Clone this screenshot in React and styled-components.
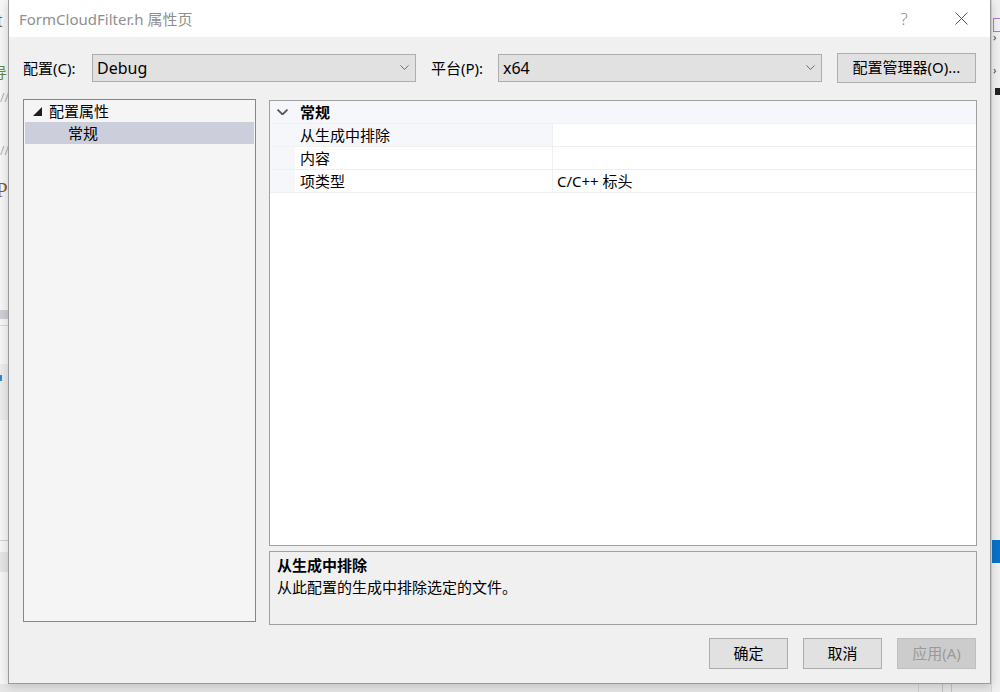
import styled, { createGlobalStyle } from "styled-components";

/** fonts: Segoe UI / YaHei look-alike */
const UI_FONT = `"Noto Sans", "Noto Sans CJK SC", sans-serif`;
const BORDER = "#adadad";

const GlobalStyle = createGlobalStyle`
  html, body { margin: 0; padding: 0; }
  body {
    font-family: ${UI_FONT};
    font-size: 15px;
    color: #000;
    overflow: hidden;
  }
`;

/** desktop behind the dialog */
const Desktop = styled.div`
  position: relative;
  width: 1000px;
  height: 692px;
  overflow: hidden;
  background: linear-gradient(to bottom, #f7f7f7 0, #f7f7f7 684px, #e6e6e6 684px);
`;

const RightPane = styled.div`
  position: absolute;
  left: 991px;
  top: 0;
  width: 9px;
  height: 692px;
  background: #f0f0f0;
  border-left: 1px solid #d8d8d8;
`;

// bits of the editor window peeking out on both sides
const Peek = styled.span`
  position: absolute;
  left: ${(p) => p.$x}px;
  top: ${(p) => p.$y}px;
  color: ${(p) => p.$color || "#999"};
  font-family: ${(p) => (p.$serif ? `"Liberation Serif", serif` : UI_FONT)};
  font-size: ${(p) => p.$size || 15}px;
  line-height: 1;
  white-space: nowrap;
`;

const Band = styled.div`
  position: absolute;
  left: ${(p) => p.$x}px;
  top: ${(p) => p.$y}px;
  width: ${(p) => p.$w}px;
  height: ${(p) => p.$h}px;
  background: ${(p) => p.$bg};
  border: ${(p) => p.$border || "none"};
  box-sizing: border-box;
`;

/** the property page dialog */
const Dialog = styled.div`
  position: absolute;
  left: 8px;
  top: 0;
  width: 983px;
  height: 684px;
  box-sizing: border-box;
  border: 1px solid #9b9b9b;
  border-top: none;
  background: #f0f0f0;
  box-shadow: 0 2px 10px rgba(0, 0, 0, 0.18);
  display: flex;
  flex-direction: column;
`;

const TitleBar = styled.div`
  height: 37px;
  flex: none;
  background: #fff;
  display: flex;
  align-items: center;
  padding-left: 10px;
`;

const Title = styled.div`
  flex: 1;
  color: #8f8f8f;
  font-size: 15px;
  line-height: 20px;
  padding-top: 1px;
`;

const TitleButton = styled.div`
  width: ${(p) => p.$w || 46}px;
  height: 37px;
  display: flex;
  align-items: center;
  justify-content: center;
  color: #8a8a8a;
  font-size: 17px;
  font-weight: 300;
`;

const Body = styled.div`
  flex: 1;
  display: flex;
  flex-direction: column;
  padding: 16px 0 0 14px;
`;

const ConfigRow = styled.div`
  display: flex;
  align-items: center;
  height: 29px;
`;

const Label = styled.div`
  width: ${(p) => p.$w}px;
  margin-left: ${(p) => p.$ml || 0}px;
  line-height: 20px;
  flex: none;
`;

const Select = styled.div`
  width: 324px;
  height: 28px;
  box-sizing: border-box;
  border: 1px solid ${BORDER};
  background: #e1e1e1;
  display: flex;
  align-items: center;
  justify-content: space-between;
  padding: 0 6px 0 4px;
  font-size: 16px;
  flex: none;
`;

const Button = styled.div`
  width: ${(p) => p.$w || 79}px;
  height: ${(p) => p.$h || 31}px;
  margin-left: ${(p) => p.$ml || 0}px;
  box-sizing: border-box;
  border: 1px solid ${(p) => (p.$disabled ? "#bfbfbf" : BORDER)};
  background: ${(p) => (p.$disabled ? "#cccccc" : "#e1e1e1")};
  color: ${(p) => (p.$disabled ? "#9a9a9a" : "#000")};
  display: flex;
  align-items: center;
  justify-content: center;
  flex: none;
  line-height: 20px;
  padding-bottom: 2px;
`;

const Main = styled.div`
  display: flex;
  gap: 13px;
  margin-top: 17px;
`;

const Tree = styled.div`
  width: 233px;
  height: 523px;
  box-sizing: border-box;
  border: 1px solid #828790;
  background: #f5f5f5;
  padding: 0 1px 1px;
  flex: none;
`;

const TreeItem = styled.div`
  height: 22px;
  display: flex;
  align-items: center;
  padding-left: ${(p) => p.$indent}px;
  background: ${(p) => (p.$selected ? "#cccedb" : "transparent")};
  line-height: 20px;
`;

const RightCol = styled.div`
  width: 708px;
  display: flex;
  flex-direction: column;
  gap: 5px;
  padding-top: 1px;
`;

const Grid = styled.div`
  height: 446px;
  box-sizing: border-box;
  border: 1px solid #a0a0a0;
  background: #fff;
`;

const GridRow = styled.div`
  display: flex;
  height: 23px;
  border-bottom: 1px solid #f0f0f0;
  box-sizing: border-box;
  line-height: 20px;
`;

const Gutter = styled.div`
  width: 25px;
  flex: none;
  background: #f5f7fb;
  display: flex;
  align-items: center;
  justify-content: center;
`;

const NameCell = styled.div`
  width: 258px;
  box-sizing: border-box;
  flex: none;
  padding-left: 5px;
  display: flex;
  align-items: center;
  background: ${(p) => (p.$hl ? "#f5f7fb" : "#fff")};
  border-right: 1px solid #f0f0f0;
`;

const HeaderCell = styled.div`
  flex: 1;
  padding-left: 5px;
  display: flex;
  align-items: center;
  background: #f5f7fb;
  font-weight: 700;
`;

const ValueCell = styled.div`
  flex: 1;
  padding-left: 4px;
  display: flex;
  align-items: center;
`;

const Description = styled.div`
  height: 74px;
  box-sizing: border-box;
  border: 1px solid #a0a0a0;
  background: #f0f0f0;
  padding: 2px 7px;
  line-height: 22px;
`;

const DescTitle = styled.div`
  font-weight: 700;
  line-height: 22px;
`;

const Footer = styled.div`
  display: flex;
  justify-content: flex-end;
  margin-top: 13px;
  padding-right: 14px;
`;

const Chevron = ({ size = 9, color = "#606060", width = 1 }) => (
  <svg width={size} height={size * 0.6} viewBox="0 0 10 6">
    <polyline points="0.5,0.5 5,5 9.5,0.5" fill="none" stroke={color} strokeWidth={width} />
  </svg>
);

const CloseIcon = () => (
  <svg width="13" height="13" viewBox="0 0 13 13">
    <path d="M0.5 0.5 L12.5 12.5 M12.5 0.5 L0.5 12.5" stroke="#555" strokeWidth="1" />
  </svg>
);

const Expanded = () => (
  <svg width="9" height="9" viewBox="0 0 9 9" style={{ marginRight: 7 }}>
    <polygon points="9,0 9,9 0,9" fill="#1e1e1e" />
  </svg>
);

const rows = [
  { name: "从生成中排除", value: "", hl: true },
  { name: "内容", value: "" },
  { name: "项类型", value: "C/C++ 标头" },
];

const App = () => {
  return (
    <Desktop>
      <GlobalStyle />
      {/* editor behind */}
      <Peek $x={-3} $y={10} $color="#8a5a2a" $serif $size={20}>
        t
      </Peek>
      <Peek $x={-8} $y={65} $color="#5b8b3b" $size={15}>
        导
      </Peek>
      <Peek $x={0} $y={92} $color="#b0b0b0" $size={12}>
        //
      </Peek>
      <Peek $x={0} $y={145} $color="#b0b0b0" $size={12}>
        //
      </Peek>
      <Peek $x={-4} $y={180} $color="#8a5a2a" $serif $size={21}>
        P
      </Peek>
      <Band $x={0} $y={310} $w={8} $h={9} $bg="#cfcfd6" />
      <Band $x={0} $y={325} $w={8} $h={1} $bg="#d8d8e0" />
      <Band $x={0} $y={364} $w={8} $h={56} $bg="#ececec" />
      <Band $x={0} $y={375} $w={2} $h={6} $bg="#2a8ae0" />
      <Band $x={0} $y={540} $w={8} $h={1} $bg="#d0d0d8" />
      <Band $x={0} $y={552} $w={8} $h={20} $bg="#e6e6e6" />
      <RightPane>
        <Band $x={1} $y={18} $w={9} $h={14} $bg="#f4eef6" $border="1px solid #b07cc0" />
        <Peek $x={1} $y={31} $color="#444" $size={11}>
          ›
        </Peek>
        <Peek $x={1} $y={64} $color="#444" $size={11}>
          ›
        </Peek>
        <Band $x={3} $y={88} $w={5} $h={7} $bg="#222" />
        <Band $x={0} $y={540} $w={9} $h={23} $bg="#0a72c9" />
      </RightPane>
      <Band $x={918} $y={684} $w={1} $h={8} $bg="#cfcfcf" />
      <Band $x={942} $y={684} $w={1} $h={8} $bg="#c4c4c4" />
      <Band $x={951} $y={684} $w={1} $h={8} $bg="#c4c4c4" />

      <Dialog>
        <TitleBar>
          <Title>FormCloudFilter.h 属性页</Title>
          <TitleButton $w={56}>?</TitleButton>
          <TitleButton $w={58}>
            <CloseIcon />
          </TitleButton>
        </TitleBar>
        <Body>
          <ConfigRow>
            <Label $w={69}>配置(C):</Label>
            <Select>
              <span>Debug</span>
              <Chevron />
            </Select>
            <Label $w={67} $ml={15}>
              平台(P):
            </Label>
            <Select>
              <span>x64</span>
              <Chevron />
            </Select>
            <Button $w={139} $h={30} $ml={15}>
              配置管理器(O)...
            </Button>
          </ConfigRow>
          <Main>
            <Tree>
              <TreeItem $indent={8}>
                <Expanded />
                配置属性
              </TreeItem>
              <TreeItem $indent={43} $selected>
                常规
              </TreeItem>
            </Tree>
            <RightCol>
              <Grid>
                <GridRow>
                  <Gutter>
                    <Chevron size={11} color="#555" width={1.6} />
                  </Gutter>
                  <HeaderCell>常规</HeaderCell>
                </GridRow>
                {rows.map((r) => (
                  <GridRow key={r.name}>
                    <Gutter />
                    <NameCell $hl={r.hl}>{r.name}</NameCell>
                    <ValueCell>{r.value}</ValueCell>
                  </GridRow>
                ))}
              </Grid>
              <Description>
                <DescTitle>从生成中排除</DescTitle>
                <div>从此配置的生成中排除选定的文件。</div>
              </Description>
            </RightCol>
          </Main>
          <Footer>
            <Button>确定</Button>
            <Button $ml={15}>取消</Button>
            <Button $ml={15} $disabled>
              应用(A)
            </Button>
          </Footer>
        </Body>
      </Dialog>
    </Desktop>
  );
};

export default App;
